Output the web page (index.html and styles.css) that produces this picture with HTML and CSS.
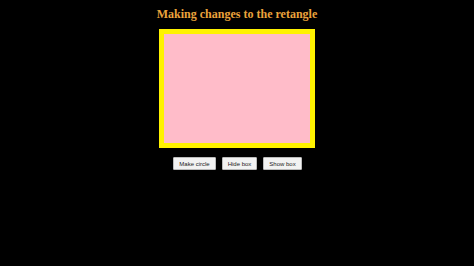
FILE: index.html
```html
<!DOCTYPE html>
<html>
<head>
    <meta charset="UTF-8">
    <title>Retangle</title>
    <link rel="stylesheet" href="styles.css">
</head>
<body>
    <div class="page">
        <h1 class="title">Making changes to the retangle</h1>
        <div class="box" id="box"></div>
        <div class="controls">
            <button class="btn" id="makeCircle">Make circle</button>
            <button class="btn" id="hideBox">Hide box</button>
            <button class="btn" id="showBox">Show box</button>
        </div>
    </div>
</body>
</html>
```

FILE: styles.css
```css
body {
    margin: 0;
    background-color: #000;
    font-family: "Liberation Sans", Arial, sans-serif;
}

.page {
    display: flex;
    flex-direction: column;
    align-items: center;
    padding-top: 7px;
}

.title {
    margin: 0;
    font-family: "Liberation Serif", "Times New Roman", serif;
    font-size: 12px;
    line-height: 15px;
    font-weight: bold;
    color: #eba33c;
}

.box {
    width: 146px;
    height: 109px;
    margin-top: 7px;
    background-color: #ffbcc9;
    border: 5px solid #fff200;
}

.controls {
    display: flex;
    gap: 6px;
    margin-top: 9px;
    padding-left: 1px;
}

.btn {
    height: 13px;
    padding: 0 5px;
    font-family: "Liberation Sans", Arial, sans-serif;
    font-size: 6px;
    color: #222;
    background-color: #f2f2f2;
    border: 1px solid #bbb;
    border-radius: 1px;
}
```
